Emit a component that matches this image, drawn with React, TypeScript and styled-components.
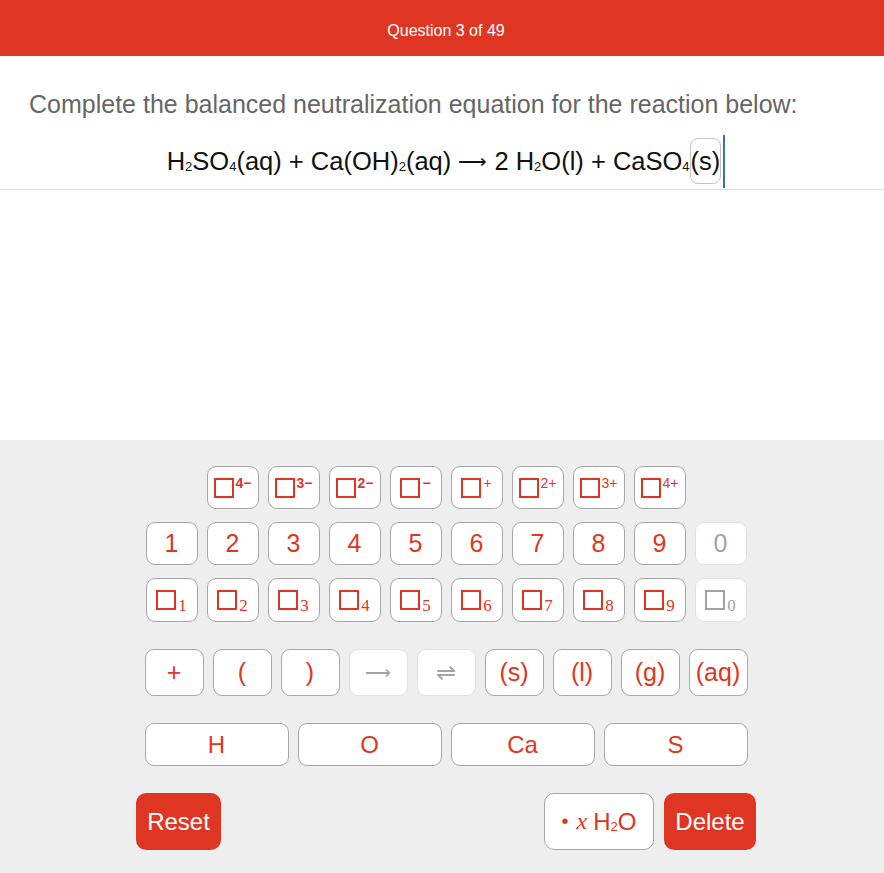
import React from "react";
import styled, { createGlobalStyle } from "styled-components";

const RED = "#df3624";
const SANS = `"Liberation Sans", Arial, sans-serif`;
const ARROW_FONT = `"DejaVu Sans", sans-serif`;

const GlobalStyle = createGlobalStyle`
  html, body {
    margin: 0;
    padding: 0;
    background: #eeeeee;
  }
  body {
    font-family: ${SANS};
  }
`;

const charges = ["4−", "3−", "2−", "−", "+", "2+", "3+", "4+"];
const digits = ["1", "2", "3", "4", "5", "6", "7", "8", "9", "0"];
const symbols = [
  { label: "+", off: false, arrow: 0 },
  { label: "(", off: false, arrow: 0 },
  { label: ")", off: false, arrow: 0 },
  { label: "⟶", off: true, arrow: 18 },
  { label: "⇌", off: true, arrow: 24 },
  { label: "(s)", off: false, arrow: 0 },
  { label: "(l)", off: false, arrow: 0 },
  { label: "(g)", off: false, arrow: 0 },
  { label: "(aq)", off: false, arrow: 0 },
];
const elements = ["H", "O", "Ca", "S"];

const App = () => {
  return (
    <Page>
      <GlobalStyle />
      <Header>Question 3 of 49</Header>
      <Main>
        <Prompt>Complete the balanced neutralization equation for the reaction below:</Prompt>
        <EquationRow>
          <Equation>
            H<Sub>2</Sub>SO<Sub>4</Sub>(aq) + Ca(OH)<Sub>2</Sub>(aq) <Arrow>⟶</Arrow> 2 H<Sub>2</Sub>O(l) + CaSO
            <Sub>4</Sub>
            <StateBox>(s)</StateBox>
            <Caret />
          </Equation>
        </EquationRow>
      </Main>

      <Keypad>
        <Panel>
          <KeyRow>
            {charges.map((c) => (
              <Key key={c} $w={52} $h={43}>
                <Slot>
                  <Square />
                  <Charge $light={c.endsWith("+")}>{c}</Charge>
                </Slot>
              </Key>
            ))}
          </KeyRow>
          <KeyRow $gapAfter={13}>
            {digits.map((d) => (
              <Key key={d} $w={52} $h={43} $off={d === "0"}>
                {d}
              </Key>
            ))}
          </KeyRow>
          <KeyRow $gapAfter={13}>
            {digits.map((d) => (
              <Key key={d} $w={52} $h={44} $off={d === "0"}>
                <SubSlot>
                  <Square $off={d === "0"} />
                  <SubDigit>{d}</SubDigit>
                </SubSlot>
              </Key>
            ))}
          </KeyRow>
          <KeyRow $gapAfter={27}>
            {symbols.map((s) => (
              <Key key={s.label} $w={59} $h={47} $off={s.off}>
                {s.arrow ? <KeyArrow $size={s.arrow}>{s.label}</KeyArrow> : s.label}
              </Key>
            ))}
          </KeyRow>
          <KeyRow $gapAfter={27}>
            {elements.map((e) => (
              <Key key={e} $w={144} $h={43} $size={24}>
                {e}
              </Key>
            ))}
          </KeyRow>
          <ActionRow>
            <RedButton $w={85}>Reset</RedButton>
            <ActionGroup>
              <WaterButton>
                <Dot>•</Dot>
                <VarX>x</VarX>H<WaterSub>2</WaterSub>O
              </WaterButton>
              <RedButton $w={92}>Delete</RedButton>
            </ActionGroup>
          </ActionRow>
        </Panel>
      </Keypad>
    </Page>
  );
};

export default App;

const Page = styled.div`
  min-height: 873px;
  display: flex;
  flex-direction: column;
  background: #eeeeee;
`;

const Header = styled.header`
  height: 56px;
  box-sizing: border-box;
  padding: 5px 0 0 8px;
  background: ${RED};
  color: #fff;
  display: flex;
  align-items: center;
  justify-content: center;
  font-family: "Liberation Sans Narrow", "Liberation Sans", Arial, sans-serif;
  font-size: 16px;
`;

const Main = styled.main`
  background: #fff;
  height: 384px;
  padding-top: 34px;
  box-sizing: border-box;
`;

const Prompt = styled.p`
  margin: 0;
  padding-left: 29px;
  color: #666;
  font-size: 25px;
  line-height: 28px;
`;

const EquationRow = styled.div`
  margin-top: 15px;
  height: 57px;
  border-bottom: 1px solid #dddddd;
  display: flex;
  justify-content: center;
  align-items: center;
  padding-left: 8px;
  box-sizing: border-box;
`;

const Equation = styled.div`
  display: flex;
  align-items: center;
  white-space: pre;
  color: #111;
  font-size: 25.5px;
  line-height: 30px;
`;

const Arrow = styled.span`
  font-family: ${ARROW_FONT};
  font-weight: 200;
  font-size: 20px;
`;

const Sub = styled.span`
  font-size: 13px;
  align-self: center;
  margin-top: 12px;
`;

const StateBox = styled.span`
  border: 1px solid #c4c4c4;
  border-radius: 8px;
  height: 46px;
  display: flex;
  align-items: center;
  box-sizing: border-box;
  padding: 0;
`;

const Caret = styled.span`
  width: 2px;
  height: 53px;
  margin-left: 2px;
  background: #3d6fae;
`;

const Keypad = styled.section`
  flex: 1;
  background: #eeeeee;
  padding: 26px 0 22px 8px;
  display: flex;
  justify-content: center;
`;

const Panel = styled.div`
  width: 620px;
  display: flex;
  flex-direction: column;
  align-items: center;
`;

const KeyRow = styled.div<{ $gapAfter?: number }>`
  display: flex;
  gap: 9px;
  margin-top: ${(p) => p.$gapAfter ?? 0}px;
`;

const Key = styled.button<{ $w: number; $h: number; $off?: boolean; $size?: number }>`
  width: ${(p) => p.$w}px;
  height: ${(p) => p.$h}px;
  box-sizing: border-box;
  display: flex;
  align-items: center;
  justify-content: center;
  padding: 0;
  background: #fff;
  border: 1px solid ${(p) => (p.$off ? "#e2e2e2" : "#a8a8a8")};
  border-radius: 9px;
  color: ${(p) => (p.$off ? "#a3a3a3" : RED)};
  font-family: ${SANS};
  font-size: ${(p) => p.$size ?? 25}px;
  cursor: pointer;
`;

const KeyArrow = styled.span<{ $size: number }>`
  font-family: ${ARROW_FONT};
  font-weight: 200;
  font-size: ${(p) => p.$size}px;
`;

const Slot = styled.span`
  display: flex;
  align-items: flex-start;
`;

const SubSlot = styled.span`
  display: flex;
  align-items: flex-end;
`;

const Square = styled.span<{ $off?: boolean }>`
  width: 20px;
  height: 20px;
  box-sizing: border-box;
  border: 2px solid ${(p) => (p.$off ? "#a3a3a3" : RED)};
`;

const Charge = styled.span<{ $light?: boolean }>`
  font-size: 14px;
  line-height: 12px;
  font-weight: ${(p) => (p.$light ? 400 : 700)};
  margin-left: 2px;
  margin-top: -1px;
`;

const SubDigit = styled.span`
  font-family: "Liberation Serif", "Times New Roman", serif;
  font-size: 17px;
  line-height: 17px;
  margin-left: 2px;
  margin-bottom: -4px;
`;

const ActionRow = styled.div`
  width: 100%;
  margin-top: 27px;
  display: flex;
  justify-content: space-between;
`;

const ActionGroup = styled.div`
  display: flex;
  gap: 10px;
`;

const RedButton = styled.button<{ $w: number }>`
  width: ${(p) => p.$w}px;
  height: 57px;
  border: none;
  border-radius: 10px;
  background: ${RED};
  color: #fff;
  font-family: ${SANS};
  font-size: 24px;
  padding: 0;
  cursor: pointer;
`;

const WaterButton = styled.button`
  width: 110px;
  height: 57px;
  box-sizing: border-box;
  border: 1px solid #a8a8a8;
  border-radius: 10px;
  background: #fff;
  color: ${RED};
  font-family: ${SANS};
  font-size: 24px;
  display: flex;
  align-items: center;
  justify-content: center;
  padding: 0;
  cursor: pointer;
`;

const Dot = styled.span`
  font-size: 20px;
  margin-right: 8px;
`;

const VarX = styled.span`
  font-family: "Liberation Serif", "Times New Roman", serif;
  font-style: italic;
  margin-right: 6px;
`;

const WaterSub = styled.span`
  font-size: 13px;
  margin-top: 10px;
`;
